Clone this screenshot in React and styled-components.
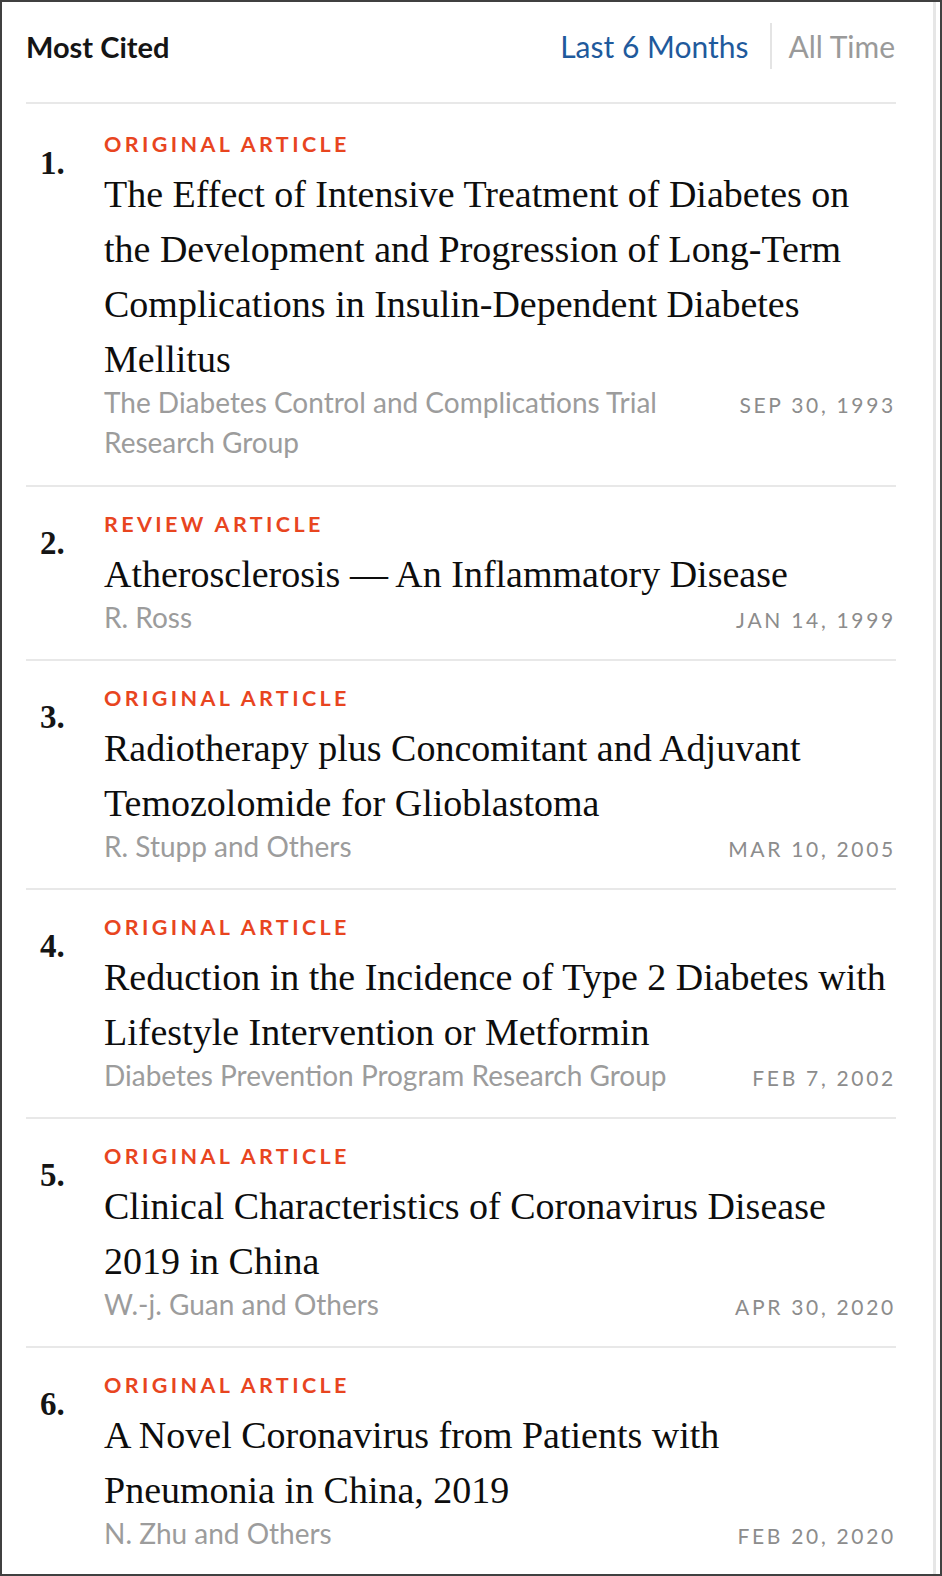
import styled, { createGlobalStyle } from "styled-components";

const GlobalStyle = createGlobalStyle`
  body {
    margin: 0;
    background: #fff;
  }
`;

const Frame = styled.div`
  width: 942px;
  height: 1576px;
  box-sizing: border-box;
  border: 2px solid #404040;
  display: flex;
  overflow: hidden;
  background: #fff;
`;

const Panel = styled.div`
  flex: 1;
  padding: 0 37px 0 24px;
  min-width: 0;
`;

const ScrollTrack = styled.div`
  width: 3px;
  margin-right: 4px;
  background: #e6e6e6;
  flex-shrink: 0;
`;

const Header = styled.div`
  height: 102px;
  box-sizing: border-box;
  padding-bottom: 12px;
  border-bottom: 2px solid #e8e8e8;
  display: flex;
  align-items: center;
  justify-content: space-between;
  font-family: Lato, "Liberation Sans", sans-serif;
`;

const Heading = styled.h2`
  margin: 0;
  font-size: 29px;
  font-weight: 700;
  color: #151515;
`;

const Tabs = styled.div`
  display: flex;
  align-items: center;
  padding-right: 1px;
`;

const Tab = styled.span`
  font-size: 30px;
  color: ${(p) => (p.$active ? "#1f5a9c" : "#9a9a9a")};
`;

const TabDivider = styled.span`
  width: 2px;
  height: 46px;
  background: #e4e4e4;
  margin: 0 16px 0 22px;
`;

const List = styled.div`
  display: flex;
  flex-direction: column;
`;

const Item = styled.article`
  display: grid;
  grid-template-columns: 78px 1fr;
  padding: 23px 0 19px;
  border-bottom: 2px solid #e8e8e8;

  &:first-child {
    padding-top: 26px;
    padding-bottom: 23px;
  }
  &:last-child {
    border-bottom: none;
  }
`;

const Rank = styled.div`
  padding-left: 14px;
  margin-top: 17px;
  font-family: "Liberation Serif", serif;
  font-size: 33px;
  font-weight: 700;
  line-height: 1;
  color: #151515;
`;

const Body = styled.div`
  min-width: 0;
`;

const Kind = styled.div`
  font-family: Lato, "Liberation Sans", sans-serif;
  font-size: 21.5px;
  font-weight: 700;
  letter-spacing: 3.4px;
  line-height: 28px;
  color: #e8451f;
`;

const Title = styled.h3`
  margin: 9px 0 0;
  font-family: "Liberation Serif", serif;
  font-size: 38px;
  font-weight: 400;
  line-height: 55px;
  color: #0d0d0d;
`;

const TitleLine = styled.span`
  display: block;
  white-space: nowrap;
`;

const Meta = styled.div`
  display: flex;
  align-items: baseline;
  justify-content: space-between;
  margin-top: -5px;
  font-family: Lato, "Liberation Sans", sans-serif;
  line-height: 40px;
`;

const Authors = styled.div`
  max-width: 600px;
  font-size: 28px;
  color: #9c9c9c;
`;

const PubDate = styled.div`
  flex-shrink: 0;
  font-size: 21px;
  letter-spacing: 2.7px;
  color: #8c8c8c;
  white-space: nowrap;
`;

const articles = [
  {
    kind: "ORIGINAL ARTICLE",
    title: [
      "The Effect of Intensive Treatment of Diabetes on",
      "the Development and Progression of Long-Term",
      "Complications in Insulin-Dependent Diabetes",
      "Mellitus",
    ],
    authors: "The Diabetes Control and Complications Trial Research Group",
    date: "SEP 30, 1993",
  },
  {
    kind: "REVIEW ARTICLE",
    title: ["Atherosclerosis — An Inflammatory Disease"],
    authors: "R. Ross",
    date: "JAN 14, 1999",
  },
  {
    kind: "ORIGINAL ARTICLE",
    title: ["Radiotherapy plus Concomitant and Adjuvant", "Temozolomide for Glioblastoma"],
    authors: "R. Stupp and Others",
    date: "MAR 10, 2005",
  },
  {
    kind: "ORIGINAL ARTICLE",
    title: ["Reduction in the Incidence of Type 2 Diabetes with", "Lifestyle Intervention or Metformin"],
    authors: "Diabetes Prevention Program Research Group",
    date: "FEB 7, 2002",
  },
  {
    kind: "ORIGINAL ARTICLE",
    title: ["Clinical Characteristics of Coronavirus Disease", "2019 in China"],
    authors: "W.-j. Guan and Others",
    date: "APR 30, 2020",
  },
  {
    kind: "ORIGINAL ARTICLE",
    title: ["A Novel Coronavirus from Patients with", "Pneumonia in China, 2019"],
    authors: "N. Zhu and Others",
    date: "FEB 20, 2020",
  },
];

const App = () => {
  return (
    <>
      <GlobalStyle />
      <Frame>
        <Panel>
          <Header>
            <Heading>Most Cited</Heading>
            <Tabs>
              <Tab $active>Last 6 Months</Tab>
              <TabDivider />
              <Tab>All Time</Tab>
            </Tabs>
          </Header>
          <List>
            {articles.map((a, i) => (
              <Item key={i}>
                <Rank>{i + 1}.</Rank>
                <Body>
                  <Kind>{a.kind}</Kind>
                  <Title>
                    {a.title.map((line) => (
                      <TitleLine key={line}>{line}</TitleLine>
                    ))}
                  </Title>
                  <Meta>
                    <Authors>{a.authors}</Authors>
                    <PubDate>{a.date}</PubDate>
                  </Meta>
                </Body>
              </Item>
            ))}
          </List>
        </Panel>
        <ScrollTrack />
      </Frame>
    </>
  );
};

export default App;
